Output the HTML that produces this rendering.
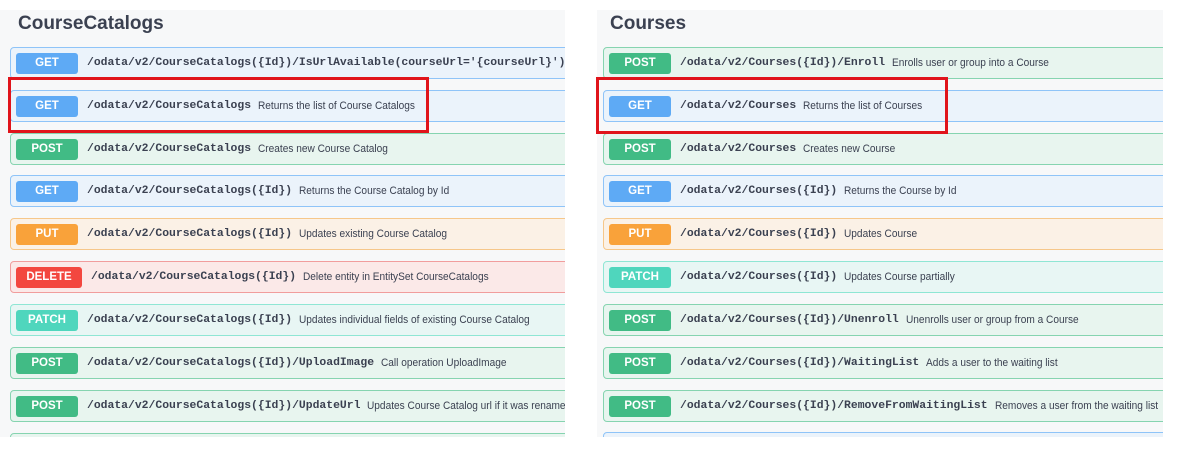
<!DOCTYPE html><html><head><style>
html,body{margin:0;width:1177px;height:452px;overflow:hidden}
body{background:#fff;position:relative;font-family:"Liberation Sans",sans-serif}
.panel{position:absolute;top:10px;height:427px;background:#f7f8f9;overflow:hidden}
h2{position:absolute;top:3px;margin:0;font-size:19px;font-weight:bold;color:#3b4151}
.r{position:absolute;width:600px;height:32px;border:1px solid;border-radius:4px;box-sizing:border-box;display:flex;align-items:center;white-space:nowrap;overflow:hidden}
.b{width:62px;height:21px;margin-left:5px;border-radius:3px;color:#fff;font-weight:bold;font-size:11.5px;display:flex;align-items:center;justify-content:center;flex:none}
.p{font-family:"Liberation Mono",monospace;font-weight:bold;font-size:11.4px;color:#3b4151;margin-left:9px}
.d{font-size:11px;color:#3b4151;margin-left:7px;transform:scaleX(.92);transform-origin:left}
.g{background:#ebf3fb;border-color:#8fc4f8}.g .b{background:#5eaaf5}
.po{background:#e8f5ef;border-color:#86d4b0}.po .b{background:#41bb85}
.pu{background:#fbf1e6;border-color:#f6c78a}.pu .b{background:#f9a23a}
.de{background:#fbe9e8;border-color:#f19d9d}.de .b{background:#f3473f}
.pa{background:#e8f6f4;border-color:#8fe6d4}.pa .b{background:#4fd6bd}
.box{position:absolute;border:3px solid #e0141b;box-sizing:border-box}
</style></head><body>
<div class="panel" style="left:0;width:565px">
<h2 style="left:18px">CourseCatalogs</h2>
<div class="r g" style="left:10px;top:37px"><div class="b">GET</div><span class="p">/odata/v2/CourseCatalogs({Id})/IsUrlAvailable(courseUrl='{courseUrl}')</span></div>
<div class="r g" style="left:10px;top:80px"><div class="b">GET</div><span class="p">/odata/v2/CourseCatalogs</span><span class="d">Returns the list of Course Catalogs</span></div>
<div class="r po" style="left:10px;top:123px"><div class="b">POST</div><span class="p">/odata/v2/CourseCatalogs</span><span class="d">Creates new Course Catalog</span></div>
<div class="r g" style="left:10px;top:165px"><div class="b">GET</div><span class="p">/odata/v2/CourseCatalogs({Id})</span><span class="d">Returns the Course Catalog by Id</span></div>
<div class="r pu" style="left:10px;top:208px"><div class="b">PUT</div><span class="p">/odata/v2/CourseCatalogs({Id})</span><span class="d">Updates existing Course Catalog</span></div>
<div class="r de" style="left:10px;top:251px"><div class="b" style="width:66px">DELETE</div><span class="p">/odata/v2/CourseCatalogs({Id})</span><span class="d">Delete entity in EntitySet CourseCatalogs</span></div>
<div class="r pa" style="left:10px;top:294px"><div class="b">PATCH</div><span class="p">/odata/v2/CourseCatalogs({Id})</span><span class="d">Updates individual fields of existing Course Catalog</span></div>
<div class="r po" style="left:10px;top:337px"><div class="b">POST</div><span class="p">/odata/v2/CourseCatalogs({Id})/UploadImage</span><span class="d">Call operation UploadImage</span></div>
<div class="r po" style="left:10px;top:380px"><div class="b">POST</div><span class="p">/odata/v2/CourseCatalogs({Id})/UpdateUrl</span><span class="d">Updates Course Catalog url if it was renamed</span></div>
<div class="r po" style="left:10px;top:423px"></div>
</div>
<div class="panel" style="left:597px;width:566px">
<h2 style="left:13px">Courses</h2>
<div class="r po" style="left:6px;top:37px"><div class="b">POST</div><span class="p">/odata/v2/Courses({Id})/Enroll</span><span class="d">Enrolls user or group into a Course</span></div>
<div class="r g" style="left:6px;top:80px"><div class="b">GET</div><span class="p">/odata/v2/Courses</span><span class="d">Returns the list of Courses</span></div>
<div class="r po" style="left:6px;top:123px"><div class="b">POST</div><span class="p">/odata/v2/Courses</span><span class="d">Creates new Course</span></div>
<div class="r g" style="left:6px;top:165px"><div class="b">GET</div><span class="p">/odata/v2/Courses({Id})</span><span class="d">Returns the Course by Id</span></div>
<div class="r pu" style="left:6px;top:208px"><div class="b">PUT</div><span class="p">/odata/v2/Courses({Id})</span><span class="d">Updates Course</span></div>
<div class="r pa" style="left:6px;top:251px"><div class="b">PATCH</div><span class="p">/odata/v2/Courses({Id})</span><span class="d">Updates Course partially</span></div>
<div class="r po" style="left:6px;top:294px"><div class="b">POST</div><span class="p">/odata/v2/Courses({Id})/Unenroll</span><span class="d">Unenrolls user or group from a Course</span></div>
<div class="r po" style="left:6px;top:337px"><div class="b">POST</div><span class="p">/odata/v2/Courses({Id})/WaitingList</span><span class="d">Adds a user to the waiting list</span></div>
<div class="r po" style="left:6px;top:380px"><div class="b">POST</div><span class="p">/odata/v2/Courses({Id})/RemoveFromWaitingList</span><span class="d">Removes a user from the waiting list</span></div>
<div class="r g" style="left:6px;top:422px"></div>
</div>
<div class="box" style="left:8px;top:77px;width:421px;height:56px"></div>
<div class="box" style="left:596px;top:77px;width:352px;height:57px"></div>
</body></html>
